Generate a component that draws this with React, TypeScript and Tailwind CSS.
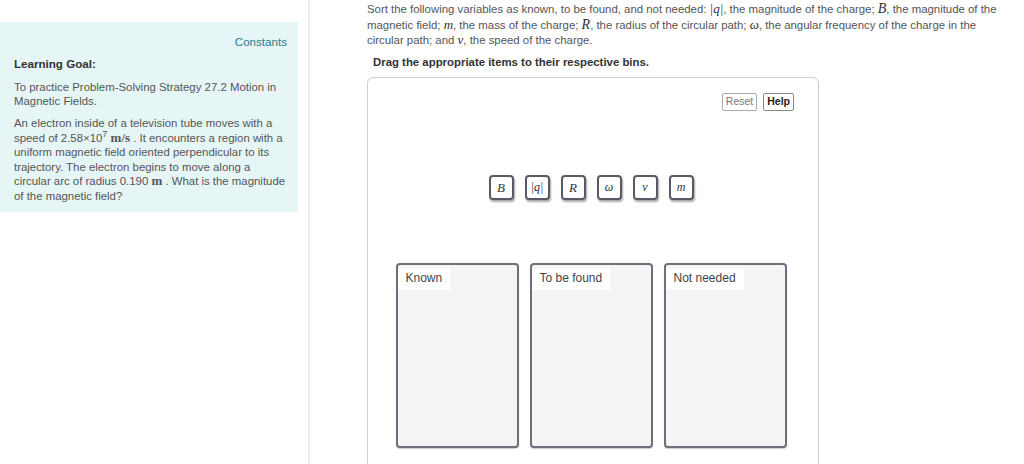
import React from "react";

const serif = { fontFamily: '"Liberation Serif", "DejaVu Serif", serif' };

function Tile({ children }: { children: React.ReactNode }) {
  return (
    <div className="w-[25px] h-[25px] bg-white border-2 border-[#5a5a66] rounded-[4px] shadow-[1px_2px_2px_rgba(0,0,0,0.35)] flex items-center justify-center italic text-[#333] font-['Liberation_Serif',serif] leading-none">
      {children}
    </div>
  );
}

function Bin({ label }: { label: string }) {
  return (
    <div className="w-[123px] h-[185px] bg-[#f5f5f5] border-2 border-[#6f6e7a] rounded-[4px] shadow-[0_1px_1px_rgba(0,0,0,0.2)]">
      <div className="inline-block bg-white px-[8px] pt-0 pb-[3px] text-[12px] text-[#444]">{label}</div>
    </div>
  );
}

export default function App() {
  return (
    <div className="w-[1024px] h-[464px] overflow-hidden bg-white flex font-['Liberation_Sans',Arial,sans-serif] text-[#555]">
      <div className="w-[298px] shrink-0 pt-[22px]">
        <div className="bg-[#e6f5f6] pl-[14px] pr-[11px] pt-[13px] pb-[12px] h-[190px]">
          <div className="text-right text-[11.6px] text-[#2a7c8c] leading-[14px]">Constants</div>
          <div className="mt-[8px] text-[11.6px] font-bold text-[#333] leading-[14px]">Learning Goal:</div>
          <p className="mt-[9px] text-[11.4px] leading-[14px]">
            To practice Problem-Solving Strategy 27.2 Motion in Magnetic Fields.
          </p>
          <p className="mt-[8px] text-[11.4px] leading-[14.5px]">
            An electron inside of a television tube moves with a speed of 2.58×10
            <sup className="text-[9px] leading-[0]">7</sup>{" "}
            <span style={serif} className="text-[13px] font-bold leading-[0]">m/s</span> . It encounters a region with a uniform magnetic field oriented perpendicular to its trajectory. The electron begins to move along a circular arc of radius 0.190{" "}
            <span style={serif} className="text-[13px] font-bold leading-[0]">m</span> . What is the magnitude of the magnetic field?
          </p>
        </div>
      </div>
      <div className="ml-[10px] w-[2px] shrink-0 bg-[#e9eef3]" />
      <div className="ml-[57px] w-[640px] shrink-0 pt-[2px]">
        <p className="text-[11.4px] leading-[15.5px] text-[#555]">
          Sort the following variables as known, to be found, and not needed:{" "}
          <span style={serif} className="italic text-[13px] text-[#333] leading-[0]">|q|</span>, the magnitude of the charge;{" "}
          <span style={serif} className="italic text-[14px] text-[#333] leading-[0]">B</span>, the magnitude of the magnetic field;{" "}
          <span style={serif} className="italic text-[13px] text-[#333] leading-[0]">m</span>, the mass of the charge;{" "}
          <span style={serif} className="italic text-[14px] text-[#333] leading-[0]">R</span>, the radius of the circular path;{" "}
          <span style={serif} className="italic text-[13px] text-[#333] leading-[0]">ω</span>, the angular frequency of the charge in the circular path; and{" "}
          <span style={serif} className="italic text-[13px] text-[#333] leading-[0]">v</span>, the speed of the charge.
        </p>
        <div className="mt-[6px] ml-[6px] text-[11.4px] font-bold text-[#333] leading-[14px]">
          Drag the appropriate items to their respective bins.
        </div>
        <div className="mt-[8px] w-[452px] h-[420px] border border-[#cfcfcf] rounded-[6px] flex flex-col">
          <div className="flex justify-end gap-[6px] pr-[24px] pt-[15px]">
            <button className="h-[18px] px-[3px] border border-[#aaa] rounded-[2px] text-[10.5px] text-[#777] bg-white leading-none">Reset</button>
            <button className="h-[18px] px-[3px] border border-[#888] rounded-[2px] text-[10.5px] font-bold text-[#222] bg-white leading-none">Help</button>
          </div>
          <div className="mt-[64px] flex justify-center gap-[11px] pr-[4px]">
            <Tile><span className="text-[13px]">B</span></Tile>
            <Tile><span className="text-[12px]">|q|</span></Tile>
            <Tile><span className="text-[13px]">R</span></Tile>
            <Tile><span className="text-[12px]">ω</span></Tile>
            <Tile><span className="text-[12px]">v</span></Tile>
            <Tile><span className="text-[12px]">m</span></Tile>
          </div>
          <div className="mt-[63px] flex justify-center gap-[11px] pr-[4px]">
            <Bin label="Known" />
            <Bin label="To be found" />
            <Bin label="Not needed" />
          </div>
        </div>
      </div>
    </div>
  );
}
